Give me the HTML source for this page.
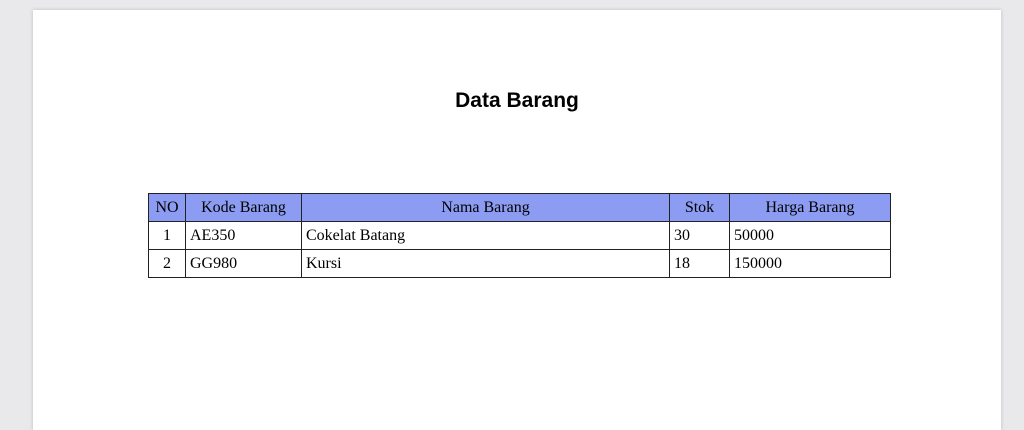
<!DOCTYPE html>
<html><head><meta charset="utf-8"><style>
html,body{margin:0;padding:0;width:1024px;height:412px;overflow:hidden;background:#e9e9eb;}
.page{position:absolute;left:33px;top:10px;width:968px;height:420px;background:#fff;box-shadow:0 0 4px rgba(0,0,0,0.18);}
h1{position:absolute;left:0;top:89px;width:1034px;margin:0;text-align:center;font:bold 21px "Liberation Sans",sans-serif;color:#000;}
table{position:absolute;left:148px;top:193px;border-collapse:collapse;font:16px "Liberation Serif",serif;color:#000;}
td,th{border:1px solid #222;height:27px;padding:0 4px;font-weight:normal;text-align:left;}
th{background:#8c9cf2;text-align:center;}
</style></head><body>
<div class="page"></div>
<h1>Data Barang</h1>
<table>
<tr><th style="width:28px">NO</th><th style="width:107px">Kode Barang</th><th style="width:359px">Nama Barang</th><th style="width:51px">Stok</th><th style="width:152px">Harga Barang</th></tr>
<tr><td style="text-align:center">1</td><td>AE350</td><td>Cokelat Batang</td><td>30</td><td>50000</td></tr>
<tr><td style="text-align:center">2</td><td>GG980</td><td>Kursi</td><td>18</td><td>150000</td></tr>
</table>
</body></html>
